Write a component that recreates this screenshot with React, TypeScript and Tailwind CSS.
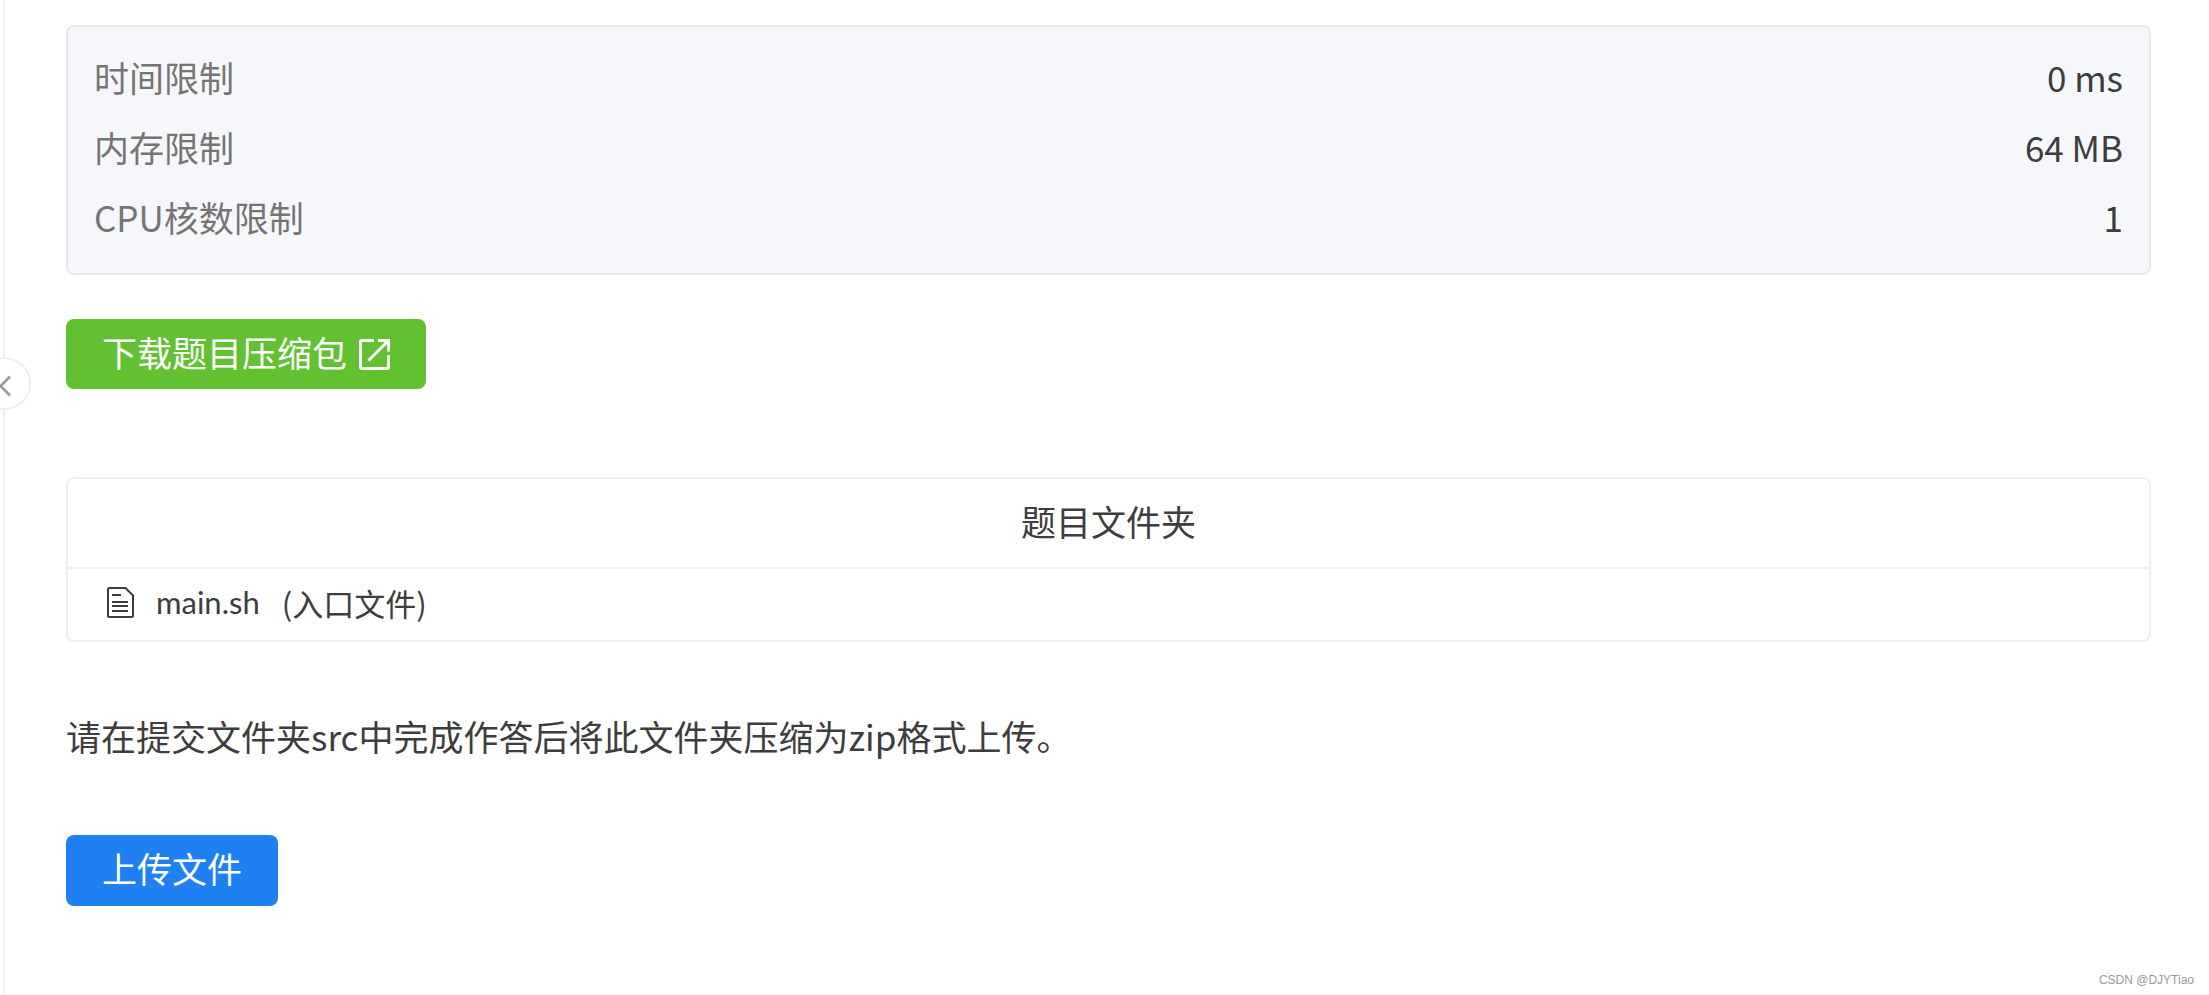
interface Limit {
  label: string
  value: string
}

const limits: Limit[] = [
  { label: '时间限制', value: '0 ms' },
  { label: '内存限制', value: '64 MB' },
  { label: 'CPU核数限制', value: '1' },
]

const files = [{ name: 'main.sh', note: '(入口文件)' }]

function ExternalLinkIcon() {
  return (
    <svg className="h-[31px] w-[31px]" viewBox="0 0 31 31" fill="none" stroke="currentColor" strokeWidth="3" aria-hidden="true">
      <path d="M15 1.5H3Q1.5 1.5 1.5 3V28Q1.5 29.5 3 29.5H28Q29.5 29.5 29.5 28V16" />
      <path d="M19 1.5H29.5V12.5M29 2L9.5 21.5" />
    </svg>
  )
}

function FileIcon() {
  return (
    <svg className="h-[31px] w-[27px]" viewBox="0 0 27 31" fill="none" stroke="currentColor" strokeWidth="2" aria-hidden="true">
      <path d="M2.5 1H18.5L26 8.5V28.5Q26 30 24.5 30H2.5Q1 30 1 28.5V2.5Q1 1 2.5 1Z" />
      <path d="M5 8H14M5 15H21M5 19H21M5 24H21" />
    </svg>
  )
}

function CollapseButton() {
  return (
    <button
      type="button"
      aria-label="收起"
      className="absolute top-[357px] -left-[27px] flex h-[53px] w-[53px] items-center justify-center rounded-full border-2 border-[#efefef] bg-white pt-1 text-[#999]"
    >
      <svg className="h-[22px] w-[12px]" viewBox="0 0 12 22" fill="none" stroke="currentColor" strokeWidth="2.6" aria-hidden="true">
        <path d="M11 1.5L1.5 11L11 20.5" />
      </svg>
    </button>
  )
}

export default function App() {
  return (
    <div className="min-h-screen overflow-hidden bg-white pl-[3px] font-['Noto_Sans_CJK_SC',sans-serif] text-[35px] text-[#3d3d3d]">
      <div className="relative flex min-h-screen flex-col border-l-2 border-[#efefef] pt-[25px] pr-[58px] pl-[61px]">
        <CollapseButton />

        <dl className="rounded-lg border-2 border-[#e8e8e8] bg-[#f5f7fa] px-[26px] pt-[15px] pb-[21px]">
          {limits.map((limit) => (
            <div key={limit.label} className="flex justify-between leading-[70px]">
              <dt className="text-[#757575]">{limit.label}</dt>
              <dd>{limit.value}</dd>
            </div>
          ))}
        </dl>

        <button
          type="button"
          className="mt-[44px] flex h-[70px] items-center gap-3 self-start rounded-lg bg-[#61c131] px-9 text-white"
        >
          <span className="pb-1">下载题目压缩包</span>
          <ExternalLinkIcon />
        </button>

        <section className="mt-[88px] rounded-lg border-2 border-[#efefef]">
          <h2 className="border-b-2 border-[#efefef] pb-1 text-center leading-[84px]">题目文件夹</h2>
          <ul className="text-[31px] leading-[67px]">
            {files.map((file) => (
              <li key={file.name} className="flex items-center gap-[22px] pb-1 pl-[39px]">
                <FileIcon />
                <span className="font-['Lato',sans-serif]">{file.name}</span>
                <span>{file.note}</span>
              </li>
            ))}
          </ul>
        </section>

        <p className="mt-[58px] leading-[71px]">请在提交文件夹src中完成作答后将此文件夹压缩为zip格式上传。</p>

        <button
          type="button"
          className="mt-[64px] h-[71px] self-start rounded-lg bg-[#1e80f3] px-9 pb-1 text-white"
        >
          上传文件
        </button>

        <footer className="absolute right-[15px] bottom-[7px] font-['Liberation_Sans',sans-serif] text-xs leading-4 text-[#999]">
          CSDN @DJYTiao
        </footer>
      </div>
    </div>
  )
}
